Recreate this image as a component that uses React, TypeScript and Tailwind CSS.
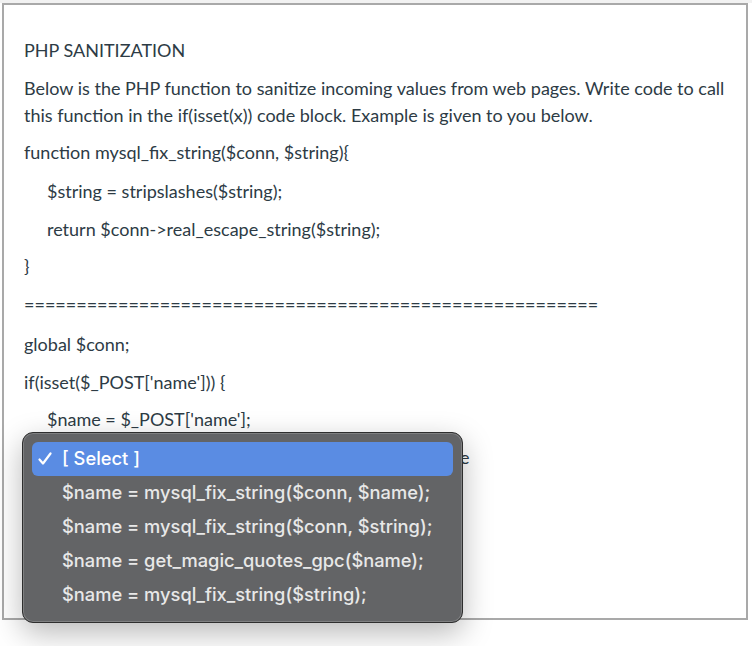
import React from "react";

const font = { fontFamily: "Lato, 'Open Sans', sans-serif" };

export default function App() {
  const options = [
    "$name = mysql_fix_string($conn, $name);",
    "$name = mysql_fix_string($conn, $string);",
    "$name = get_magic_quotes_gpc($name);",
    "$name = mysql_fix_string($string);",
  ];
  return (
    <div className="relative w-[752px] h-[646px] bg-white overflow-hidden" style={font}>
      <div className="h-[3px] bg-[#f2f2f2]" />
      <div className="ml-[2px] w-[746px] h-[617px] border-2 border-[#a9a9a9] bg-white overflow-hidden">
        <div className="pl-[20px] pr-[16px] pt-[32px] text-[18px] leading-[27px] text-[#2d3b45] [&>p]:mb-[10.7px]">
          <p>PHP SANITIZATION</p>
          <p>
            Below is the PHP function to sanitize incoming values from web pages. Write code to call this function in the if(isset(x)) code block. Example is given to you below.
          </p>
          <p className="!mb-[11.5px]">{"function mysql_fix_string($conn, $string){"}</p>
          <p className="pl-[23px]">{"$string = stripslashes($string);"}</p>
          <p className="pl-[23px]">{"return $conn->real_escape_string($string);"}</p>
          <p>{"}"}</p>
          <p className="whitespace-nowrap !mb-[13px]">=======================================================</p>
          <p>{"global $conn;"}</p>
          <p>{"if(isset($_POST['name'])) {"}</p>
          <p className="pl-[23px]">{"$name = $_POST['name'];"}</p>
          <p className="pl-[23px]">
            <span className="inline-block w-[413px]" />e
          </p>
          <p className="pl-[23px]">{"echo $name;"}</p>
          <p>{"}"}</p>
        </div>
      </div>

      <div
        className="absolute left-[22px] top-[432px] w-[441px] h-[191px] rounded-[11px] border border-[#2e2e2e] bg-[#636466] shadow-[0_10px_30px_rgba(0,0,0,0.28),inset_0_0_0_1px_rgba(255,255,255,0.18)] px-[9px] pt-[9px]"
        style={{ fontFamily: "Inter, 'Open Sans', sans-serif" }}
      >
        <div className="flex items-center h-[34px] rounded-[6px] bg-[#5a8ce3] text-white text-[18.3px] font-medium">
          <span className="w-[30px] pl-[6px] flex items-center">
            <svg width="14" height="14" viewBox="0 0 14 14" fill="none">
              <path d="M1.5 7.5 L5 11.5 L12.5 1.5" stroke="white" strokeWidth="2.2" strokeLinecap="round" strokeLinejoin="round" />
            </svg>
          </span>
          <span>[ Select ]</span>
        </div>
        {options.map((o) => (
          <div key={o} className="flex items-center h-[34px] text-[#e8e8e8] text-[18.3px] font-medium">
            <span className="w-[30px]" />
            <span>{o}</span>
          </div>
        ))}
      </div>
    </div>
  );
}
